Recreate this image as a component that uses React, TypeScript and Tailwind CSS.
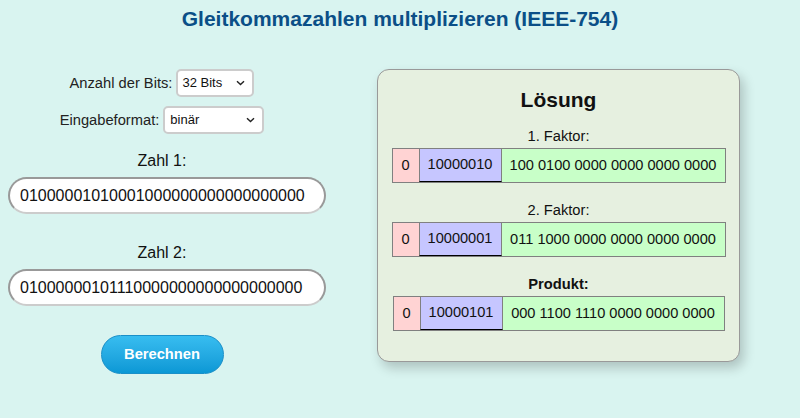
import React from 'react'

type Row = { label: string; bold?: boolean; width: string; sign: string; exp: string; mant: string }

const rows: Row[] = [
  { label: '1. Faktor:', width: 'w-[334px]', sign: '0', exp: '10000010', mant: '100 0100 0000 0000 0000 0000' },
  { label: '2. Faktor:', width: 'w-[334px]', sign: '0', exp: '10000001', mant: '011 1000 0000 0000 0000 0000' },
  { label: 'Produkt:', bold: true, width: 'w-[332px]', sign: '0', exp: '10000101', mant: '000 1100 1110 0000 0000 0000' },
]

function Chevron() {
  return (
    <svg width="9" height="6" viewBox="0 0 9 6" className="text-[#222]">
      <path d="M1 1.2 L4.5 4.6 L8 1.2" fill="none" stroke="currentColor" strokeWidth="1.4" />
    </svg>
  )
}

function BitRow({ row }: { row: Row }) {
  return (
    <div className="flex flex-col items-center">
      <p className={`text-[14.7px] leading-[16px] text-[#111] ${row.bold ? 'font-bold' : ''}`}>{row.label}</p>
      <div className={`mt-[4px] flex h-[35px] ${row.width} border border-[#808080] text-[14.6px] text-[#111]`}>
        <div className="flex w-[26px] items-center justify-center bg-[#ffd3d3]">{row.sign}</div>
        <div className="flex w-[83px] items-center justify-center border-x border-x-[#808080] border-b border-b-black bg-[#c6c6ff]">
          {row.exp}
        </div>
        <div className="flex flex-1 items-center justify-center bg-[#c8ffc8]">{row.mant}</div>
      </div>
    </div>
  )
}

export default function App() {
  return (
    <div className="h-[418px] w-[800px] bg-[#d9f4f0] font-['Liberation_Sans',Arial,sans-serif]">
      <h1 className="pt-[7px] text-center text-[21px] leading-[24px] font-bold text-[#0b4f87]">
        Gleitkommazahlen multiplizieren (IEEE-754)
      </h1>
      <div className="mt-[38px] flex">
        <div className="flex w-[324px] flex-col items-center">
          <div className="flex items-center gap-[4px] text-[14.7px] text-[#222]">
            <span>Anzahl der Bits:</span>
            <div className="flex h-[28px] w-[78px] items-center justify-between rounded-[5px] border-2 border-[#ccc] bg-white pl-[4px] pr-[7px] text-[13px] text-[#111]">
              <span>32 Bits</span>
              <Chevron />
            </div>
          </div>
          <div className="mt-[9px] flex items-center gap-[4px] text-[14.7px] text-[#222]">
            <span>Eingabeformat:</span>
            <div className="flex h-[28px] w-[101px] items-center justify-between rounded-[5px] border-2 border-[#ccc] bg-white pl-[5px] pr-[7px] text-[13px] text-[#111]">
              <span>binär</span>
              <Chevron />
            </div>
          </div>
          <p className="mt-[17px] text-[16px] leading-[20px] text-[#111]">Zahl 1:</p>
          <div className="mt-[6px] ml-[8px] flex h-[37px] w-[318px] shrink-0 items-center self-start rounded-full border-2 border-[#999] border-b-[#ccc] bg-white px-[10px] text-[16px] text-[#111]">
            01000001010001000000000000000000
          </div>
          <p className="mt-[29px] text-[16px] leading-[20px] text-[#111]">Zahl 2:</p>
          <div className="mt-[6px] ml-[8px] flex h-[37px] w-[318px] shrink-0 items-center self-start rounded-full border-2 border-[#999] border-b-[#ccc] bg-white px-[10px] text-[16px] text-[#111]">
            01000000101110000000000000000000
          </div>
          <button className="mt-[29px] h-[39px] w-[123px] rounded-full border border-[#1a8fc8] bg-gradient-to-b from-[#37bdf0] to-[#0a98d5] text-[14.7px] font-bold text-white">
            Berechnen
          </button>
        </div>
        <div className="ml-[53px] flex h-[293px] w-[363px] flex-col items-center rounded-[12px] border border-[#999] bg-[#e6f0e0] pt-[18px] shadow-[4px_6px_12px_rgba(0,0,0,0.2)]">
          <h2 className="text-[21px] leading-[24px] font-bold text-[#111]">Lösung</h2>
          <div className="mt-[16px] flex flex-col gap-[19px]">
            {rows.map((r, i) => (
              <BitRow key={i} row={r} />
            ))}
          </div>
        </div>
      </div>
    </div>
  )
}
